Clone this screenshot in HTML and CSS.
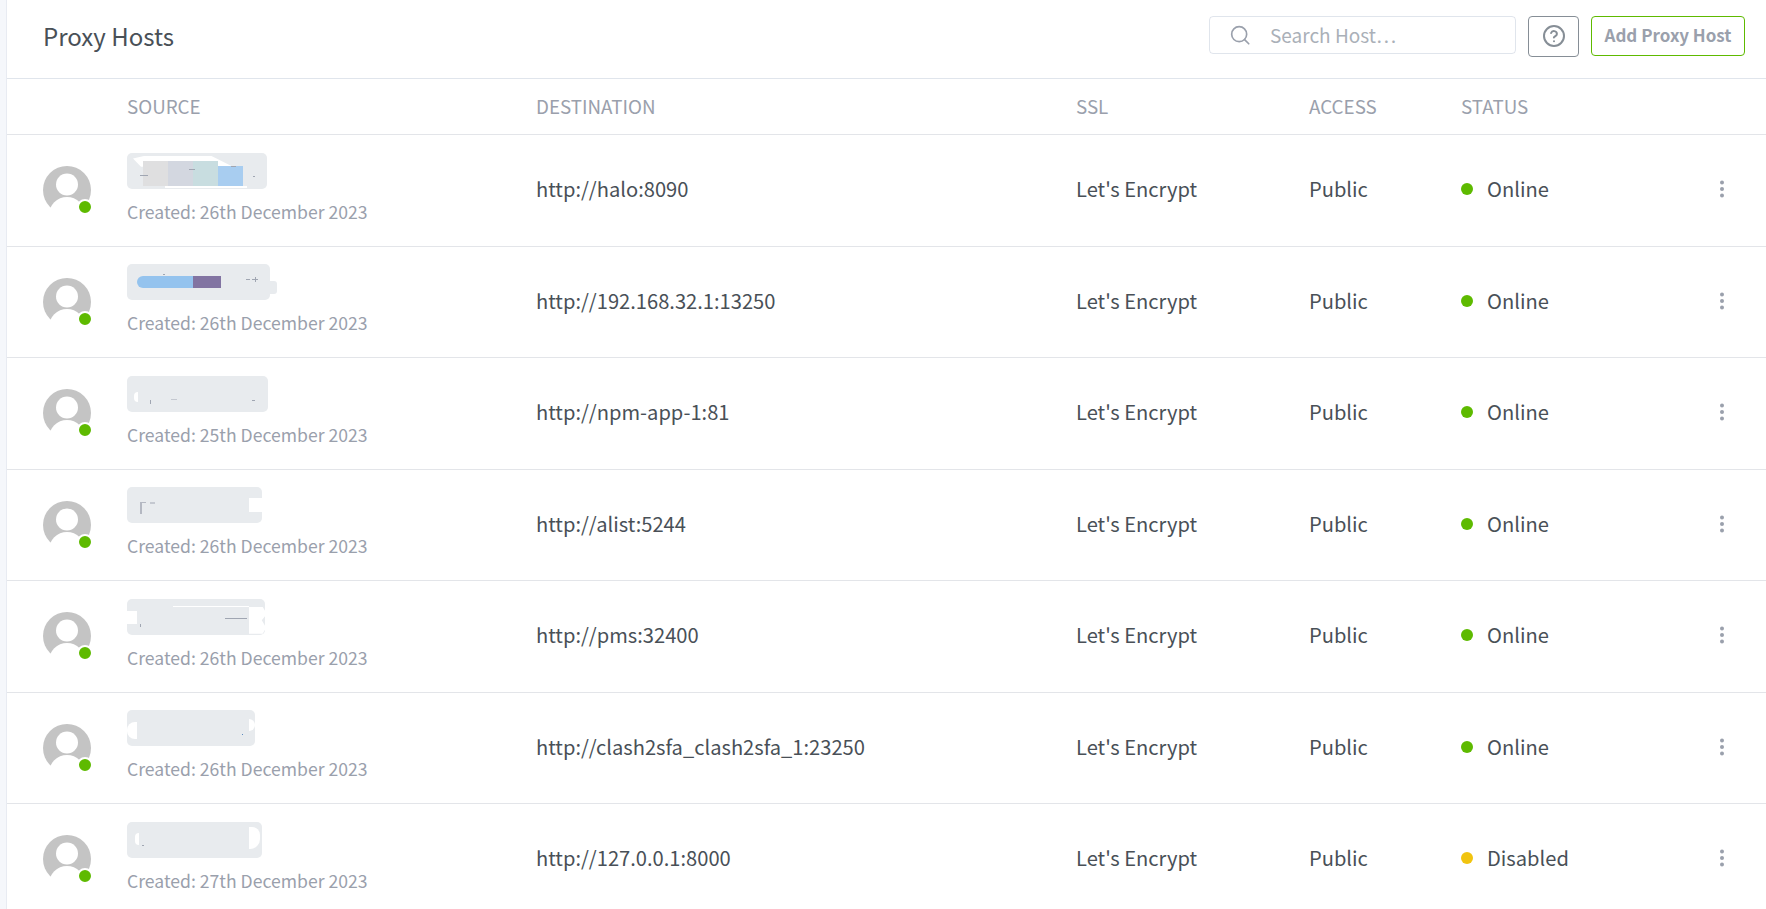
FILE: index.html
```html
<!DOCTYPE html>
<html lang="en">
<head>
<meta charset="utf-8">
<title>Proxy Hosts</title>
<link rel="stylesheet" href="styles.css">
</head>
<body>
<svg class="defs" width="0" height="0" aria-hidden="true">
  <defs>
    <symbol id="avatar" viewBox="0 0 48 48">
      <circle cx="24" cy="24" r="24" fill="#c4c4c4"/>
      <circle cx="24" cy="18.5" r="11" fill="#fff"/>
      <ellipse cx="24" cy="49" rx="18" ry="18" fill="#fff"/>
      <rect x="0" y="42" width="48" height="6" fill="#fff"/>
    </symbol>
    <symbol id="dots" viewBox="0 0 6 18">
      <circle cx="3" cy="2.5" r="2" fill="#9aa0ac"/>
      <circle cx="3" cy="9" r="2" fill="#9aa0ac"/>
      <circle cx="3" cy="15.5" r="2" fill="#9aa0ac"/>
    </symbol>
  </defs>
</svg>
<main class="page">
  <header class="top">
    <h1 class="title">Proxy Hosts</h1>
    <div class="tools">
      <label class="search">
        <svg class="search-icon" viewBox="0 0 24 24" fill="none" stroke="#9aa0ac" stroke-width="2" stroke-linecap="round"><circle cx="11" cy="11" r="9"/><path d="M17.5 17.5 22.5 22.5"/></svg>
        <span class="search-text">Search Host…</span>
      </label>
      <button class="help" type="button" aria-label="Help">
        <svg class="help-icon" viewBox="0 0 24 24" fill="none" stroke="#868e96" stroke-width="2" stroke-linecap="round" stroke-linejoin="round"><circle cx="12" cy="12" r="10"/><path d="M9.1 9a3 3 0 0 1 5.8 1c0 2-3 2.6-3 3.6"/><path d="M12 17.2h.01"/></svg>
      </button>
      <button class="add" type="button">Add Proxy Host</button>
    </div>
  </header>
  <div class="row head">
    <div></div>
    <div>SOURCE</div>
    <div>DESTINATION</div>
    <div>SSL</div>
    <div>ACCESS</div>
    <div>STATUS</div>
    <div></div>
  </div>
  <div class="row">
    <div class="avatar"><svg class="avatar-img"><use href="#avatar"/></svg><span class="avatar-dot"></span></div>
    <div class="source"><div class="mask m1"><i class="f1a"></i><i class="f1b"></i><i class="f1c"></i><i class="f1d"></i><i class="f1e"></i><i class="f1f"></i><i class="mk f1g"></i><i class="mk f1h"></i><i class="mk f1i"></i><i class="mk f1j"></i></div><div class="created">Created: 26th December 2023</div></div>
    <div>http://halo:8090</div><div>Let's Encrypt</div><div>Public</div>
    <div class="status"><span class="dot on"></span>Online</div>
    <div class="menu"><svg class="dots"><use href="#dots"/></svg></div>
  </div>
  <div class="row">
    <div class="avatar"><svg class="avatar-img"><use href="#avatar"/></svg><span class="avatar-dot"></span></div>
    <div class="source"><div class="mask m2"><i class="f2a"></i><i class="f2b"></i><i class="f2c"></i><i class="mk f2d"></i><i class="mk f2e"></i><i class="mk f2f"></i><i class="mk f2g"></i></div><div class="created">Created: 26th December 2023</div></div>
    <div>http://192.168.32.1:13250</div><div>Let's Encrypt</div><div>Public</div>
    <div class="status"><span class="dot on"></span>Online</div>
    <div class="menu"><svg class="dots"><use href="#dots"/></svg></div>
  </div>
  <div class="row">
    <div class="avatar"><svg class="avatar-img"><use href="#avatar"/></svg><span class="avatar-dot"></span></div>
    <div class="source"><div class="mask m3"><i class="f3a"></i><i class="mk f3b"></i><i class="mk f3c"></i><i class="mk f3d"></i></div><div class="created">Created: 25th December 2023</div></div>
    <div>http://npm-app-1:81</div><div>Let's Encrypt</div><div>Public</div>
    <div class="status"><span class="dot on"></span>Online</div>
    <div class="menu"><svg class="dots"><use href="#dots"/></svg></div>
  </div>
  <div class="row">
    <div class="avatar"><svg class="avatar-img"><use href="#avatar"/></svg><span class="avatar-dot"></span></div>
    <div class="source"><div class="mask m4"><i class="f4a"></i><i class="f4b"></i><i class="f4c"></i><i class="f4d"></i></div><div class="created">Created: 26th December 2023</div></div>
    <div>http://alist:5244</div><div>Let's Encrypt</div><div>Public</div>
    <div class="status"><span class="dot on"></span>Online</div>
    <div class="menu"><svg class="dots"><use href="#dots"/></svg></div>
  </div>
  <div class="row">
    <div class="avatar"><svg class="avatar-img"><use href="#avatar"/></svg><span class="avatar-dot"></span></div>
    <div class="source"><div class="mask m5"><i class="f5a"></i><i class="f5b"></i><i class="f5c"></i><i class="mk f5d"></i><i class="mk f5e"></i></div><div class="created">Created: 26th December 2023</div></div>
    <div>http://pms:32400</div><div>Let's Encrypt</div><div>Public</div>
    <div class="status"><span class="dot on"></span>Online</div>
    <div class="menu"><svg class="dots"><use href="#dots"/></svg></div>
  </div>
  <div class="row">
    <div class="avatar"><svg class="avatar-img"><use href="#avatar"/></svg><span class="avatar-dot"></span></div>
    <div class="source"><div class="mask m6"><i class="f6a"></i><i class="f6b"></i><i class="mk f6c"></i></div><div class="created">Created: 26th December 2023</div></div>
    <div>http://clash2sfa_clash2sfa_1:23250</div><div>Let's Encrypt</div><div>Public</div>
    <div class="status"><span class="dot on"></span>Online</div>
    <div class="menu"><svg class="dots"><use href="#dots"/></svg></div>
  </div>
  <div class="row">
    <div class="avatar"><svg class="avatar-img"><use href="#avatar"/></svg><span class="avatar-dot"></span></div>
    <div class="source"><div class="mask m7"><i class="f7a"></i><i class="f7b"></i><i class="mk f7c"></i></div><div class="created">Created: 27th December 2023</div></div>
    <div>http://127.0.0.1:8000</div><div>Let's Encrypt</div><div>Public</div>
    <div class="status"><span class="dot off"></span>Disabled</div>
    <div class="menu"><svg class="dots"><use href="#dots"/></svg></div>
  </div>
</main>
</body>
</html>
```
FILE: styles.css
```css
* { box-sizing: border-box; }
html, body { margin: 0; height: 100%; overflow: hidden; }
body {
  background: #fff;
  color: #495057;
  font-family: "Noto Sans CJK SC", "Noto Sans", sans-serif;
  font-size: 20.13px;
  line-height: 26px;
}
.defs { position: absolute; }
.page {
  height: 909px;
  margin-left: 6px;
  border-left: 1px solid #e8ebf2;
  box-shadow: -6px 0 0 #f5f7fb;
  overflow: hidden;
  clip-path: inset(0 0 0 -6px);
}
.top {
  display: flex;
  align-items: center;
  justify-content: space-between;
  height: 79px;
  padding: 0 21px 0 36px;
  border-bottom: 1px solid rgba(0, 40, 100, .12);
}
.title { margin: 0 0 7px; font-size: 24px; line-height: 30px; font-weight: 400; }
.tools { display: flex; gap: 12px; align-items: flex-start; margin-top: -6px; }
.search {
  display: flex; align-items: center;
  width: 307px; height: 38px;
  padding-left: 20px;
  border: 1px solid rgba(0, 40, 100, .12);
  border-radius: 4px;
  color: #aab0b8;
}
.search-icon { width: 20px; height: 20px; margin-right: 20px; }
.search-text { font-size: 19px; }
.help {
  display: flex; align-items: center; justify-content: center;
  width: 51px; height: 41px; padding: 0;
  background: #fff;
  border: 1px solid #868e96;
  border-radius: 4px;
}
.help-icon { width: 24px; height: 24px; }
.add {
  width: 154px; height: 40px; padding: 0 0 2px;
  background: #fff;
  border: 1px solid #5eba00;
  border-radius: 4px;
  color: #9aa0ac;
  font: 700 17px/22px "Noto Sans CJK SC", "Noto Sans", sans-serif;
}
.row {
  display: grid;
  grid-template-columns: 120px 409px 540px 233px 152px 1fr 47px;
  align-items: center;
  height: 111.5px;
  padding-bottom: 2px;
  border-bottom: 1px solid #e3e5e9;
}
.head {
  height: 56px;
  color: #9aa0ac;
  font-size: 18.8px;
}
.avatar { position: relative; width: 48px; height: 48px; margin: 2px 0 0 36px; }
.avatar-img { display: block; width: 48px; height: 48px; }
.avatar-dot {
  position: absolute; right: -2px; bottom: -1px;
  width: 16px; height: 16px;
  border: 2px solid #fff;
  border-radius: 50%;
  background: #5eba00;
}
.source { display: flex; flex-direction: column; gap: 10px; padding-bottom: 1px; }
.created { color: #9aa0ac; font-size: 17.6px; line-height: 26px; }
.status { display: flex; align-items: center; }
.dot { width: 12px; height: 12px; margin-right: 14px; border-radius: 50%; }
.on { background: #5eba00; }
.off { background: #f1c40f; }
.menu { display: flex; }
.dots { width: 6px; height: 18px; }

.mask { position: relative; height: 36px; background: #e8ebee; border-radius: 5px; }
.mask i { position: absolute; display: block; }
.mask .mk { height: 1px; background: #a0a6b2; }
.m1 { width: 140px; }
.m2 { width: 143px; }
.m3 { width: 141px; }
.m4 { width: 135px; }
.m5 { width: 138px; }
.m6 { width: 128px; }
.m7 { width: 135px; }
.f1a { left: 6px; top: 3px; width: 100px; height: 11px; background: #fff; clip-path: polygon(0 25%, 12% 0, 78% 0, 100% 100%, 8% 100%); }
.f1b { left: 16px; top: 8px; width: 25px; height: 25px; background: #dfdfe0; }
.f1c { left: 41px; top: 8px; width: 25px; height: 25px; background: #d3d7e0; }
.f1d { left: 66px; top: 8px; width: 25px; height: 25px; background: #c8dde0; }
.f1e { left: 91px; top: 13px; width: 25px; height: 20px; background: #a8cdf0; }
.f1f { left: 38px; top: 33px; width: 82px; height: 2px; background: #fff; }
.mask .f1g { left: 13px; top: 22px; width: 8px; }
.mask .f1h { left: 62px; top: 16px; width: 6px; }
.mask .f1i { left: 104px; top: 13px; width: 5px; }
.mask .f1j { left: 126px; top: 23px; width: 2px; }
.f2a { left: 10px; top: 12px; width: 56px; height: 12px; background: #94c3ee; border-radius: 6px 0 0 6px; }
.f2b { left: 66px; top: 12px; width: 28px; height: 12px; background: #8274a2; }
.f2c { right: -7px; top: 17px; width: 7px; height: 13px; background: #e8ebee; border-radius: 0 3px 3px 0; }
.mask .f2d { left: 119px; top: 15px; width: 4px; }
.mask .f2e { left: 125px; top: 15px; width: 6px; }
.mask .f2f { left: 128px; top: 13px; width: 1px; height: 5px; }
.mask .f2g { left: 36px; top: 10px; width: 2px; }
.f3a { left: 7px; top: 16px; width: 4px; height: 10px; background: #fff; border-radius: 4px 0 0 4px; }
.mask .f3b { left: 23px; top: 24px; width: 1px; height: 4px; }
.mask .f3c { left: 125px; top: 24px; width: 3px; }
.mask .f3d { left: 44px; top: 23px; width: 6px; background: #c4c8d0; }
.f4a { left: 122px; top: 11px; width: 13px; height: 14px; background: #fff; }
.f4b { left: 13px; top: 15px; width: 2px; height: 12px; background: #b4b8c2; }
.f4c { left: 13px; top: 15px; width: 6px; height: 1px; background: #b4b8c2; }
.f4d { left: 23px; top: 15px; width: 5px; height: 2px; background: #c4c8d0; }
.f5a { left: 0; top: 12px; width: 10px; height: 13px; background: #fff; }
.f5b { left: 122px; top: 8px; width: 16px; height: 27px; background: #fff; clip-path: polygon(0 0, 85% 0, 100% 15%, 100% 35%, 80% 50%, 100% 70%, 100% 85%, 85% 100%, 0 100%); }
.f5c { left: 46px; top: 7px; width: 76px; height: 1px; background: #fff; }
.mask .f5d { left: 13px; top: 25px; width: 1px; height: 3px; }
.mask .f5e { left: 98px; top: 19px; width: 22px; }
.f6a { left: 0; top: 12px; width: 10px; height: 17px; background: #fff; border-radius: 8px 0 0 8px; }
.f6b { left: 122px; top: 9px; width: 6px; height: 12px; background: #fff; border-radius: 0 6px 6px 0; }
.mask .f6c { left: 115px; top: 24px; width: 1px; background: #5a8ac0; }
.f7a { left: 122px; top: 5px; width: 11px; height: 22px; background: #fff; border-radius: 0 8px 10px 0; }
.f7b { left: 8px; top: 11px; width: 4px; height: 12px; background: #fff; border-radius: 4px 0 0 4px; }
.mask .f7c { left: 15px; top: 23px; width: 2px; }
```
